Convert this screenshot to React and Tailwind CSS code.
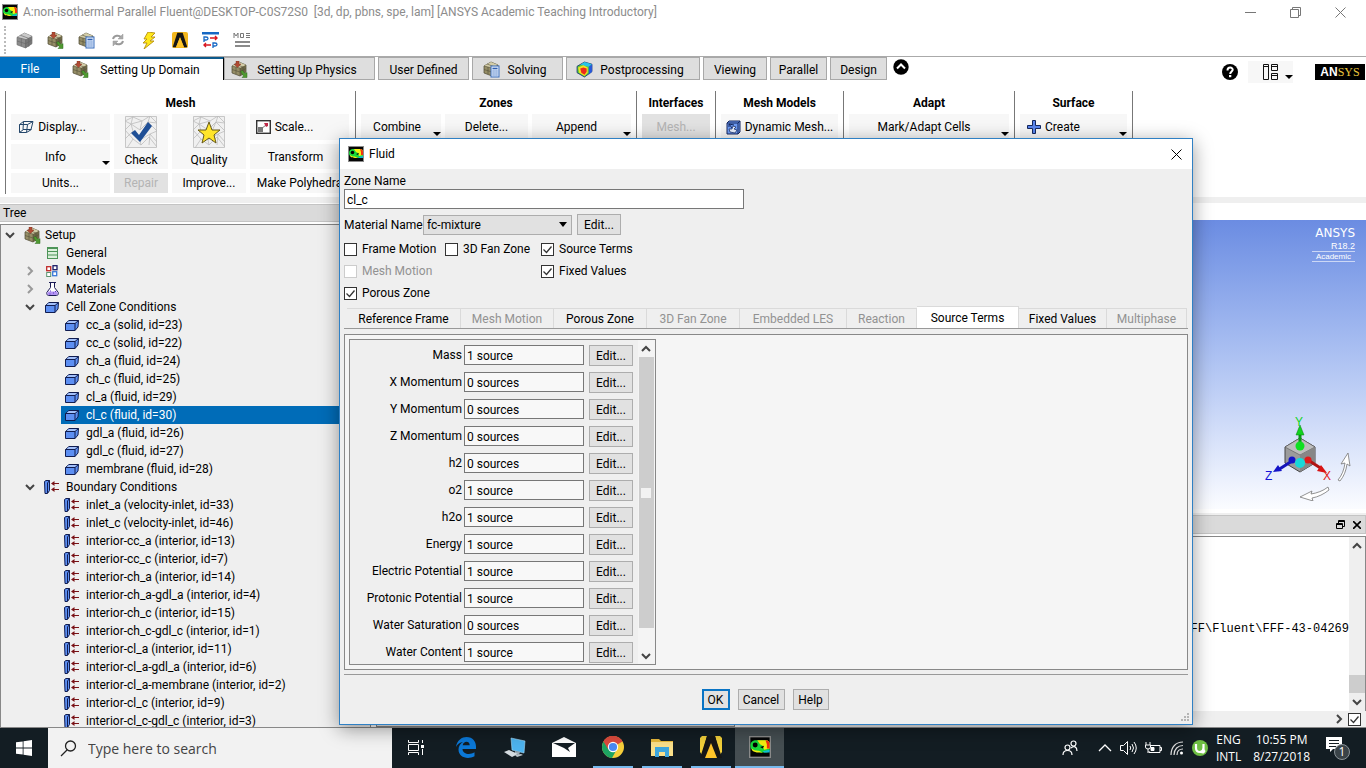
import React, { useState } from "react";
import { clsx } from "clsx";

/* --- DATA --- */

const treeItems = [
  { label: "Setup", level: 0, icon: "setup", arrow: "down" },
  { label: "General", level: 1, icon: "general" },
  { label: "Models", level: 1, icon: "models", arrow: "right" },
  { label: "Materials", level: 1, icon: "flask", arrow: "right" },
  { label: "Cell Zone Conditions", level: 1, icon: "cell", arrow: "down" },
  { label: "cc_a (solid, id=23)", level: 2, icon: "cell" },
  { label: "cc_c (solid, id=22)", level: 2, icon: "cell" },
  { label: "ch_a (fluid, id=24)", level: 2, icon: "cell" },
  { label: "ch_c (fluid, id=25)", level: 2, icon: "cell" },
  { label: "cl_a (fluid, id=29)", level: 2, icon: "cell" },
  { label: "cl_c (fluid, id=30)", level: 2, icon: "cell" },
  { label: "gdl_a (fluid, id=26)", level: 2, icon: "cell" },
  { label: "gdl_c (fluid, id=27)", level: 2, icon: "cell" },
  { label: "membrane (fluid, id=28)", level: 2, icon: "cell" },
  { label: "Boundary Conditions", level: 1, icon: "boundary", arrow: "down" },
  { label: "inlet_a (velocity-inlet, id=33)", level: 2, icon: "boundary" },
  { label: "inlet_c (velocity-inlet, id=46)", level: 2, icon: "boundary" },
  { label: "interior-cc_a (interior, id=13)", level: 2, icon: "boundary" },
  { label: "interior-cc_c (interior, id=7)", level: 2, icon: "boundary" },
  { label: "interior-ch_a (interior, id=14)", level: 2, icon: "boundary" },
  { label: "interior-ch_a-gdl_a (interior, id=4)", level: 2, icon: "boundary" },
  { label: "interior-ch_c (interior, id=15)", level: 2, icon: "boundary" },
  { label: "interior-ch_c-gdl_c (interior, id=1)", level: 2, icon: "boundary" },
  { label: "interior-cl_a (interior, id=11)", level: 2, icon: "boundary" },
  { label: "interior-cl_a-gdl_a (interior, id=6)", level: 2, icon: "boundary" },
  { label: "interior-cl_a-membrane (interior, id=2)", level: 2, icon: "boundary" },
  { label: "interior-cl_c (interior, id=9)", level: 2, icon: "boundary" },
  { label: "interior-cl_c-gdl_c (interior, id=3)", level: 2, icon: "boundary" },
];

const sources = [
  ["Mass", "1 source"],
  ["X Momentum", "0 sources"],
  ["Y Momentum", "0 sources"],
  ["Z Momentum", "0 sources"],
  ["h2", "0 sources"],
  ["o2", "1 source"],
  ["h2o", "1 source"],
  ["Energy", "1 source"],
  ["Electric Potential", "1 source"],
  ["Protonic Potential", "1 source"],
  ["Water Saturation", "0 sources"],
  ["Water Content", "1 source"],
];

const zoneTabs = [
  { label: "Reference Frame", width: "w-[114px]" },
  { label: "Mesh Motion", width: "w-[93px]", disabled: true },
  { label: "Porous Zone", width: "w-[93px]" },
  { label: "3D Fan Zone", width: "w-[93px]", disabled: true },
  { label: "Embedded LES", width: "w-[107px]", disabled: true },
  { label: "Reaction", width: "w-[70px]", disabled: true },
  { label: "Source Terms", width: "w-[102px]" },
  { label: "Fixed Values", width: "w-[88px]" },
  { label: "Multiphase", width: "w-[80px]", disabled: true },
];

/* --- ICONS --- */

const FluentIcon = ({ size = 16 }) => (
  <svg width={size} height={size} viewBox="0 0 16 16">
    <rect width="16" height="16" fill="#8a8a8a" />
    <rect x="1" y="1" width="14" height="14" fill="#050505" />
    <path d="M1 7c0-3 2-4 4-4h7c2 0 3 1 3 3v5c-1 1-3 1-5 1-2 0-3-1-4-1-3 0-5-1-5-4z" fill="#18d83a" />
    <path d="M6 3h6c2 0 3 1 3 3v3l-4 1-1-3-2-1z" fill="#f4ee10" />
    <path d="M12 3c2 0 3 1 3 3v3h-2V6z" fill="#f23010" />
    <path d="M2 9c2 2 4 1 6 2l2 1c-4 0-8 0-8-3z" fill="#f4ee10" />
    <path d="M10 11l5-1v2h-4z" fill="#10b8d8" />
    <circle cx="4.500" cy="6.500" r="1.800" fill="#000" />
    <path d="M8 8l3-1-1 2z" fill="#050505" />
  </svg>
);

const CubeBase = ({ gray }) => (
  <>
    <path d="M1 5l7-4 7 3v7l-6 4-8-3z" fill={gray ? "#8c8c8c" : "#958d66"} stroke={gray ? "#6f6f6f" : "#4c4832"} strokeWidth=".7" />
    <path d="M1 5l7-4 7 3-6 3z" fill={gray ? "#c9c9c9" : "#d3cda8"} />
    <path d="M9 7l6-3v7l-6 4z" fill={gray ? "#777" : "#6c6646"} />
    <path d="M1 5l8 2v8M4 3l8 3v8M1 8.500l8 2.500 6-3.500M5 6v7" fill="none" stroke={gray ? "#666" : "#55503a"} strokeWidth=".6" />
  </>
);

const CubeIcon = ({ gray }) => (
  <svg width="17" height="17" viewBox="0 0 16 16"><CubeBase gray={gray} /></svg>
);

const SetupIcon = () => (
  <svg width="17" height="17" viewBox="0 0 17 17" className="shrink-0">
    <CubeBase />
    <path d="M5 0h3v3h2L6.500 6.500 3 3h2z" fill="#b04a34" stroke="#7c2d1c" strokeWidth=".4" />
    <path d="M9.500 10.500l2-1 2.500 3 2-1v5h-5l1.500-1.500z" fill="#4f9a30" stroke="#2f6a1c" strokeWidth=".5" />
  </svg>
);

const CalcIcon = () => (
  <svg width="17" height="17" viewBox="0 0 17 17">
    <CubeBase />
    <rect x="8" y="5" width="8" height="11" fill="#dce9fb" stroke="#3d6ebc" />
    <path d="M9.500 7.500h5" stroke="#2f5faf" strokeWidth="1.500" />
    <path d="M9.500 10h5M9.500 12h5M9.500 14h5" stroke="#3d6ebc" strokeDasharray="1.200 .7" />
  </svg>
);

const RainbowCube = () => (
  <svg width="17" height="17" viewBox="0 0 16 16">
    <path d="M1 5l7-4 7 2v7l-7 5-7-4z" fill="#5ccc3a" stroke="#1c2f7a" strokeWidth=".8" />
    <path d="M4 3.500L8 1l7 2-3 2.500z" fill="#28c4e8" />
    <path d="M12 5.500L15 3v7l-3 3z" fill="#2858dc" />
    <path d="M2 6l5-2 4 2v5l-3 3-5-3z" fill="#f4e020" />
    <path d="M4 7l3-1 3 1v3l-2 3-3-2z" fill="#ee2a1c" />
  </svg>
);

const RefreshIcon = () => (
  <svg width="16" height="16" viewBox="0 0 16 16" fill="none" stroke="#999" strokeWidth="2">
    <path d="M3 7c1-4 6-4 8-2M13 9c-1 4-6 4-8 2" />
    <path d="M13 2v5H8zM3 14V9h5z" fill="#aaa" stroke="#999" strokeWidth=".5" />
  </svg>
);

const BoltIcon = () => (
  <svg width="16" height="17" viewBox="0 0 16 17">
    <path d="M7 0L14 1 10 5h4L9 9h4L3 17l3-6H2l4-4H3z" fill="#ffe81a" stroke="#b48d10" strokeWidth=".9" />
  </svg>
);

const AnsysMark = ({ size = 16, dark }) => (
  <svg width={size} height={size} viewBox="0 0 24 24">
    {!dark && <rect width="24" height="24" rx="3" fill="#f3b71d" />}
    {dark && <path d="M1 3l2-2h5L3 20l-2-3zM16 1h5l2 2v14l-2 3z" fill="#f3d03a" />}
    <path d="M8 1h8l7 22h-5L12 8 6 23H1z" fill="#161616" />
    <path d="M12 8l6 15H6z" fill="#ffc52a" />
  </svg>
);

const SwapIcon = () => (
  <svg width="17" height="17" viewBox="0 0 17 17">
    <path d="M0 1h17" stroke="#1668c4" strokeWidth="3" />
    <path d="M2 10V5h2q2 0 2 1.500T4 8H2M11 16v-5h2q2 0 2 1.500T13 14h-2" fill="none" stroke="#1668c4" strokeWidth="1.300" />
    <path d="M8 6h7m-2-2l2 2-2 2M9 13H2m2-2l-2 2 2 2" fill="none" stroke="#d8161f" strokeWidth="1.400" />
  </svg>
);

const ModelListIcon = () => (
  <svg width="17" height="17" viewBox="0 0 17 17" fill="none" stroke="#777">
    <path d="M1 6V1l2 3 2-3v5M7.500 1.500h3v4h-3zM13 1.500h4M13 3.500h4M13 5.500h4" />
    <path d="M2 10h15M2 14h15" strokeWidth="2" stroke="#8a8a8a" />
  </svg>
);

const WireCubeIcon = () => (
  <svg width="15" height="14" viewBox="0 0 15 14" fill="none" stroke="#24466a">
    <path d="M.5 4.500h8l-1 8h-7zM4.500 1.500h9.500l-2 8H4zM.5 4.500l4-3M8.500 4.500l5.500-3M7.500 12.500l5-3M.5 12.500l4-3" />
  </svg>
);

const MeshArt = ({ children }) => (
  <svg width="32" height="32" viewBox="0 0 32 32">
    <rect width="32" height="32" fill="#f0f0f0" />
    <path
      d="M0 5l8-4 9 4 8-5 7 7M0 14l6-6 9 6 8-8 9 9M0 23l8-8 7 9 10-6 7 8M2 32l6-9 8 6 8-8 8 10M8 0L6 8 0 5M17 5l-2 9 8-8M8 15l-2-7 11-3M25 0l-2 6 9 1M8 23l-8-9M15 24l8-18M16 29l-1-5M25 18l7-3M24 29l1-11M.5.500h31v31H.5z"
      fill="none"
      stroke="#bcbcbc"
      strokeWidth=".8"
    />
    {children}
  </svg>
);

const ScaleIcon = () => (
  <svg width="15" height="14" viewBox="0 0 15 14">
    <rect x=".7" y=".7" width="13.600" height="12.600" fill="#fff" stroke="#333" strokeWidth="1.400" />
    <path d="M2 7h5v5H2z" fill="#777" />
    <path d="M5 9l5-4" stroke="#777" />
    <path d="M8 3h4v3l-2 1z" fill="#c02a4a" />
  </svg>
);

const DynamicMeshIcon = () => (
  <svg width="15" height="15" viewBox="0 0 15 15">
    <path d="M1 3l2-2h11v11l-2 2H1z" fill="#6e9cf4" stroke="#14275e" />
    <path d="M1 3h11v11M12 3l2-2" stroke="#14275e" fill="none" />
    <path d="M3 7V4l5 1M3 4l3 4" stroke="#14275e" fill="none" />
    <path d="M7 6l3 1-2 2 3 1-2 3-5-1-1-3h3z" fill="#e6eefc" stroke="#14275e" strokeWidth=".7" />
  </svg>
);

const PlusIcon = () => (
  <svg width="14" height="14" viewBox="0 0 14 14">
    <path d="M5.500.5h3v5h5v3h-5v5h-3v-5h-5v-3h5z" fill="#5a86ee" stroke="#14275e" />
  </svg>
);

const CellIcon = () => (
  <svg width="14" height="11" viewBox="0 0 14 11" className="shrink-0">
    <path d="M.5 3.500L4 .5h9.500L13 7l-3 3.500H.5z" fill="#5d8ff2" stroke="#101c50" />
    <path d="M1 3.500L4 1h9l-3 2.500z" fill="#a3c0fa" />
    <path d="M.5 3.500H10v7M10 3.500l3.500-3" fill="none" stroke="#101c50" />
  </svg>
);

const BoundaryIcon = () => (
  <svg width="16" height="14" viewBox="0 0 16 14" className="shrink-0">
    <path d="M.5 1.500L2 .5h3.500v10l-2 3H1z" fill="#5d8ff2" stroke="#101c50" />
    <path d="M3.500 3v10M3.500 3l2-2.500" stroke="#101c50" />
    <path d="M8 3.500h7M8 9.500h7" stroke="#7a1216" strokeWidth="1.200" />
    <path d="M7 3.500L10.500 1v5zM7 9.500L10.500 7v5z" fill="#7a1216" />
  </svg>
);

const GeneralIcon = () => (
  <svg width="11" height="12" viewBox="0 0 11 12" className="shrink-0">
    <rect x=".5" y=".5" width="10" height="11" fill="#dcf0dc" stroke="#4d9458" />
    <path d="M0 1.500h11M1 4.500h9M1 8h9" stroke="#4d9458" />
  </svg>
);

const ModelsIcon = () => (
  <svg width="12" height="12" viewBox="0 0 12 12" fill="#fff" className="shrink-0">
    <rect x=".7" y="1.700" width="4" height="4" stroke="#c02828" strokeWidth="1.300" />
    <rect x="7" y=".7" width="4" height="4" stroke="#1a1a66" strokeWidth="1.300" />
    <rect x=".7" y="7.500" width="4" height="4" stroke="#5c9470" strokeWidth="1" />
    <rect x="6.700" y="6.700" width="4" height="4" stroke="#3a78d8" strokeWidth="1.300" />
  </svg>
);

const FlaskIcon = () => (
  <svg width="13" height="14" viewBox="0 0 13 14" className="shrink-0">
    <path d="M4.500.5v5L.8 10.500q-.5 3 2 3h7.500q2.500 0 2-3L8.500 5.500v-5" fill="#fff" stroke="#1c1c55" />
    <path d="M3 .5h7" stroke="#1c1c55" />
    <path d="M2 9.500h9l1 2-1 1.500H2l-1-1.500z" fill="#b394f2" />
    <path d="M4 9h1M7 11h1M9 9.500h1M3.500 12h1" stroke="#5c32c8" />
  </svg>
);

const treeIcons = {
  setup: <SetupIcon />,
  general: <GeneralIcon />,
  models: <ModelsIcon />,
  flask: <FlaskIcon />,
  cell: <CellIcon />,
  boundary: <BoundaryIcon />,
};

const Chevron = ({ dir, light }) => (
  <svg width="10" height="10" viewBox="0 0 10 10" fill="none" stroke={light ? "#999" : "#444"} strokeWidth="2">
    {dir === "down" && <path d="M1 3l4 4 4-4" />}
    {dir === "up" && <path d="M1 7l4-4 4 4" />}
    {dir === "right" && <path d="M3 1l4 4-4 4" />}
  </svg>
);

const Caret = () => (
  <svg width="8" height="4" viewBox="0 0 8 4" className="absolute right-0 bottom-1">
    <path d="M0 0h8L4 4z" />
  </svg>
);

const CloseIcon = () => (
  <svg width="11" height="11" viewBox="0 0 11 11" stroke="currentColor" fill="none">
    <path d="M.5.5l10 10M10.500.5l-10 10" />
  </svg>
);

const AxisTriad = () => (
  <svg width="90" height="90" viewBox="0 0 90 90" aria-label="Axis triad">
    <path d="M20 36l15-9 15 9v16L35 61l-15-9z" fill="#9b9b9b" stroke="#444" />
    <path d="M20 36l15-9 15 9-15 8z" fill="#bdbdbd" stroke="#555" strokeWidth=".6" />
    <path d="M35 44l15-8v16l-15 9z" fill="#878787" />
    <path d="M35 35V20" stroke="#0a9a14" strokeWidth="3" />
    <path d="M35 14l-4 10h8z" fill="#12d41e" stroke="#0a7a10" strokeWidth=".5" />
    <circle cx="35" cy="35" r="4.500" fill="#10e020" />
    <path d="M27 50l-14 9" stroke="#1414b8" strokeWidth="3" />
    <path d="M8 61l5-7 4 6z" fill="#1414c8" />
    <circle cx="27" cy="49" r="3.500" fill="#1414c8" />
    <path d="M43 49l14 9" stroke="#b01414" strokeWidth="3" />
    <path d="M62 62l-10-2 4-6z" fill="#d81414" />
    <circle cx="43" cy="49" r="3.500" fill="#e01a1a" />
    <circle cx="35" cy="52" r="5" fill="#18d8d8" />
    <text x="30" y="15" fontSize="12" fill="#12d41e" fontFamily="Liberation Sans">Y</text>
    <text x="0" y="69" fontSize="12" fill="#1414d8" fontFamily="Liberation Sans">Z</text>
    <text x="58" y="69" fontSize="12" fill="#e01a1a" fontFamily="Liberation Sans">X</text>
    <g fill="#fff" stroke="#777" strokeWidth=".8">
      <path d="M73 69c4-5 6-10 7-17l-4 1 7-11 2 13-3-2c-1 7-3 12-7 17z" />
      <path d="M63 80c-5 4-11 6-17 7l1-3-12 6 13 4-1-3c6-1 12-4 17-8z" transform="translate(0 -4)" />
    </g>
  </svg>
);

/* --- SHARED CONTROLS --- */

const RibbonButton = ({ children, caret, disabled, className }) => (
  <button
    disabled={disabled}
    className={clsx(
      "relative flex items-center justify-center gap-1 whitespace-nowrap",
      disabled ? "bg-[#e2e2e2] text-[#b4b4b4]" : "bg-[#f7f7f7]",
      className
    )}
  >
    {children}
    {caret && <Caret />}
  </button>
);

const RibbonGroup = ({ title, children, className }) => (
  <section className={clsx("flex flex-col border-r border-[#777] px-[5px]", className)}>
    <h2 className="flex h-[23px] items-center justify-center font-bold">{title}</h2>
    <div className="flex gap-1">{children}</div>
  </section>
);

const PushButton = ({ children, primary, className }) => (
  <button
    className={clsx(
      "h-[21px] shrink-0 bg-[#e1e1e1] leading-4",
      primary ? "border-2 border-[#0a74c4]" : "border border-[#adadad]",
      className
    )}
  >
    {children}
  </button>
);

const CheckBox = ({ label, checked: initial = false, disabled, className }) => {
  const [checked, setChecked] = useState(initial);
  return (
    <label className={clsx("flex h-[22px] items-center gap-[5px]", disabled && "text-[#929292]", className)}>
      <span className="relative flex">
        <input
          type="checkbox"
          aria-label={label ? undefined : "Auto scroll"}
          checked={checked}
          disabled={disabled}
          onChange={(e) => setChecked(e.target.checked)}
          className="size-[13px] appearance-none border border-[#333] bg-white disabled:border-[#ccc]"
        />
        {checked && (
          <svg viewBox="0 0 13 13" className="pointer-events-none absolute inset-0" fill="none" stroke="#333" strokeWidth="1.300">
            <path d="M2.500 6.500l3 3 5-6" />
          </svg>
        )}
      </span>
      {label}
    </label>
  );
};

/* --- MAIN WINDOW --- */

const TitleBar = () => (
  <header className="flex h-6 shrink-0 items-center bg-white pl-[2px] text-[#8c8c8c]">
    <FluentIcon />
    <h1 className="ml-[5px] whitespace-pre">
      {"A:non-isothermal Parallel Fluent@DESKTOP-C0S72S0  [3d, dp, pbns, spe, lam] [ANSYS Academic Teaching Introductory]"}
    </h1>
    <div className="ml-auto flex items-center gap-[34px] pr-5">
      <button aria-label="Minimize" className="h-px w-[11px] bg-[#777]" />
      <button aria-label="Restore" className="text-[#777]">
        <svg width="11" height="11" viewBox="0 0 11 11" fill="none" stroke="currentColor">
          <path d="M.5 2.500h8v8h-8zM2.500 2.500v-2h8v8h-2" />
        </svg>
      </button>
      <button aria-label="Close" className="text-[#777]"><CloseIcon /></button>
    </div>
  </header>
);

const Toolbar = () => (
  <nav className="flex h-[33px] shrink-0 items-center border-b border-[#aaa] pl-1">
    <span className="mr-[10px] h-7 border-l-2 border-dotted border-[#bbb]" />
    <div className="flex gap-[14px]">
      <button aria-label="Mesh" className="flex w-[17px] justify-center"><CubeIcon gray /></button>
      <button aria-label="Setup" className="flex w-[17px] justify-center"><SetupIcon /></button>
      <button aria-label="Solution" className="flex w-[17px] justify-center"><CalcIcon /></button>
      <button aria-label="Refresh" className="flex w-[17px] justify-center"><RefreshIcon /></button>
      <button aria-label="Update" className="flex w-[17px] justify-center"><BoltIcon /></button>
      <button aria-label="Workbench" className="flex w-[17px] justify-center"><AnsysMark /></button>
      <button aria-label="Parameters" className="flex w-[17px] justify-center"><SwapIcon /></button>
      <button aria-label="Model list" className="flex w-[17px] justify-center"><ModelListIcon /></button>
    </div>
  </nav>
);

const RibbonTab = ({ icon, children, className }) => (
  <button
    className={clsx(
      "mr-[3px] flex h-[23px] items-center justify-center border border-[#a8a8a8] bg-[#dedede] pt-[2px]",
      className
    )}
  >
    {icon}
    <span className="grow">{children}</span>
  </button>
);

const RibbonTabs = () => (
  <div className="flex h-6 items-start">
    <button className="h-[21px] w-[60px] bg-[#0070c0] pt-[2px] text-white">File</button>
    <button className="flex h-[23px] w-[164px] items-center border-t-2 border-r border-t-[#0d5a8c] border-r-black bg-white pl-3">
      <SetupIcon />
      <span className="grow pr-3">Setting Up Domain</span>
    </button>
    <RibbonTab icon={<SetupIcon />} className="w-[151px] pr-2 pl-[6px]">Setting Up Physics</RibbonTab>
    <RibbonTab className="w-[91px]">User Defined</RibbonTab>
    <RibbonTab icon={<CalcIcon />} className="w-[91px] pr-2 pl-[10px]">Solving</RibbonTab>
    <RibbonTab icon={<RainbowCube />} className="w-[134px] pr-2 pl-[9px]">Postprocessing</RibbonTab>
    <RibbonTab className="w-[64px]">Viewing</RibbonTab>
    <RibbonTab className="w-[57px]">Parallel</RibbonTab>
    <RibbonTab className="w-[57px]">Design</RibbonTab>
    <button aria-label="Collapse ribbon" className="ml-[3px] pt-[2px]">
      <svg width="16" height="16" viewBox="0 0 16 16">
        <circle cx="8" cy="8" r="7.700" />
        <path d="M4 9.500l4-4 4 4" fill="none" stroke="#fff" strokeWidth="2" />
      </svg>
    </button>
  </div>
);

const Ribbon = () => (
  <div className="flex shrink-0 bg-white">
    <div className="h-[140px]">
      <RibbonTabs />
      <div className="flex items-start pt-[10px]">
        <RibbonGroup title="Mesh" className="ml-[5px] h-[103px] w-[351px] border-l">
          <div className="flex w-[99px] flex-col gap-1">
            <RibbonButton className="h-[26px] pr-4"><WireCubeIcon />Display...</RibbonButton>
            <RibbonButton caret className="h-[25px] pr-[10px]">Info</RibbonButton>
            <RibbonButton className="h-5">Units...</RibbonButton>
          </div>
          <div className="flex w-[54px] flex-col gap-1">
            <RibbonButton className="h-[55px] flex-col">
              <MeshArt><path d="M6 17l4-3 4 5L23 6l4 4-12 16z" fill="#1f4f96" /></MeshArt>
              Check
            </RibbonButton>
            <RibbonButton disabled className="h-5">Repair</RibbonButton>
          </div>
          <div className="flex w-[74px] flex-col gap-1">
            <RibbonButton className="h-[55px] flex-col">
              <MeshArt>
                <path d="M16 6l3 8h8l-6 5 2 8-7-5-7 5 2-8-6-5h8z" fill="#ffe52a" stroke="#66591a" />
              </MeshArt>
              Quality
            </RibbonButton>
            <RibbonButton className="h-5">Improve...</RibbonButton>
          </div>
          <div className="flex w-[99px] flex-col gap-1">
            <RibbonButton className="h-[26px] pr-[30px]"><ScaleIcon />Scale...</RibbonButton>
            <RibbonButton className="h-[25px] pr-2">Transform</RibbonButton>
            <RibbonButton className="h-5">Make Polyhedra</RibbonButton>
          </div>
        </RibbonGroup>
        <RibbonGroup title="Zones" className="h-[103px] w-[281px]">
          <RibbonButton caret className="h-[26px] w-[80px] pr-2">Combine</RibbonButton>
          <RibbonButton className="h-[26px] w-[83px]">Delete...</RibbonButton>
          <RibbonButton caret className="h-[26px] w-[99px] pr-[10px]">Append</RibbonButton>
        </RibbonGroup>
        <RibbonGroup title="Interfaces" className="h-[103px] w-[79px]">
          <RibbonButton disabled className="h-[26px] w-[68px]">Mesh...</RibbonButton>
        </RibbonGroup>
        <RibbonGroup title="Mesh Models" className="h-[103px] w-[128px]">
          <RibbonButton className="h-[26px] w-[117px]"><DynamicMeshIcon />Dynamic Mesh...</RibbonButton>
        </RibbonGroup>
        <RibbonGroup title="Adapt" className="h-[103px] w-[171px]">
          <RibbonButton caret className="h-[26px] w-[160px] pr-[10px]">Mark/Adapt Cells</RibbonButton>
        </RibbonGroup>
        <RibbonGroup title="Surface" className="h-[103px] w-[118px]">
          <RibbonButton caret className="h-[26px] w-[107px] pr-10"><PlusIcon />Create</RibbonButton>
        </RibbonGroup>
      </div>
    </div>
    <div className="ml-auto flex h-7 items-center gap-[10px] pt-[2px] pr-px">
      <button aria-label="Help">
        <svg width="16" height="16" viewBox="0 0 16 16">
          <circle cx="8" cy="8" r="8" />
          <path d="M5.500 6.500c0-4 5.500-3.500 5.200-.6C10.500 7.500 8.200 7.500 8.200 10" fill="none" stroke="#fff" strokeWidth="2" />
          <rect x="7" y="11" width="2.300" height="2.200" fill="#fff" />
        </svg>
      </button>
      <button aria-label="Arrange panes" className="relative flex h-[22px] w-[45px] items-center bg-[#f7f7f7] pl-[14px]">
        <svg width="17" height="16" viewBox="0 0 17 16" fill="none" stroke="#111">
          <path d="M1.500.5h5v15h-5zM9.500.5h6v6h-6zM9.500 9.500h6v6h-6zM1 2.500h6M9 2.500h7M9 11.500h7" />
        </svg>
        <Caret />
      </button>
      <span className="ml-3 flex h-4 w-[50px] items-center justify-center bg-black font-['Liberation_Sans',sans-serif] text-[12px] font-bold text-white">
        AN<span className="font-['Liberation_Serif',serif] font-normal text-[#e8c63c]">SYS</span>
      </span>
    </div>
  </div>
);

const TreePane = () => {
  const [selected, setSelected] = useState("cl_c (fluid, id=30)");
  return (
    <aside className="flex w-[371px] shrink-0 flex-col">
      <h2 className="h-[18px] border-y border-[#c4c4c4] bg-[#dadada] pl-[3px] leading-4">Tree</h2>
      <ul className="mt-[2px] min-h-0 grow basis-0 overflow-hidden border border-b-0 border-[#888] bg-[#efefef] pt-px">
        {treeItems.map((item) => (
          <li key={item.label} className="flex h-[18px] items-center">
            <span
              className={clsx(
                "flex shrink-0 items-center pl-1",
                item.level === 0 && "w-[22px]",
                item.level === 1 && "w-[40px] pl-6",
                item.level === 2 && "w-[60px]"
              )}
            >
              {item.arrow && <Chevron dir={item.arrow} light={item.arrow === "right"} />}
            </span>
            <button
              onClick={() => setSelected(item.label)}
              className={clsx(
                "flex h-[18px] grow items-center text-left whitespace-nowrap",
                selected === item.label && "bg-[#006cb8] text-white"
              )}
            >
              <span className={clsx("flex shrink-0 justify-center", item.level === 0 ? "w-[22px] pr-1" : "w-[25px] pr-[3px]")}>
                {treeIcons[item.icon]}
              </span>
              {item.label}
            </button>
          </li>
        ))}
      </ul>
    </aside>
  );
};

const GraphicsPane = () => (
  <div className="mt-4 flex h-[289px] shrink-0 flex-col items-end justify-between bg-linear-to-b from-[#6b8ce2] to-[#fbfcff]">
    <div className="flex flex-col items-end pt-[5px] pr-[11px] font-['DejaVu_Sans',sans-serif] text-white">
      <span className="text-[12px] leading-4">ANSYS</span>
      <span className="font-['Liberation_Sans',sans-serif] text-[9px] leading-[10px]">R18.2</span>
      <span className="border-y border-white/60 px-1 font-['Liberation_Sans',sans-serif] text-[8px] leading-[9px]">Academic</span>
    </div>
    <div className="pr-[11px] pb-2"><AxisTriad /></div>
  </div>
);

const ConsolePane = () => (
  <div className="mt-1 flex min-h-0 grow flex-col border-t-2 border-[#efefef]">
    <div className="flex h-[19px] shrink-0 items-center justify-end gap-2 border border-[#c4c4c4] bg-[#dadada] pr-1">
      <button aria-label="Float console">
        <svg width="9" height="9" viewBox="0 0 9 9" fill="none" stroke="#000">
          <path d="M.5 3.500h6v5h-6zM.5 4.500h6M2.500 3V.5h6v6H7M2.500 1.500h6" />
        </svg>
      </button>
      <button aria-label="Close console">
        <svg width="8" height="8" viewBox="0 0 8 8" stroke="#000" strokeWidth="1.600"><path d="M0 0l8 8M8 0L0 8" /></svg>
      </button>
    </div>
    <div className="mt-[2px] flex min-h-0 grow border-t border-r border-[#888] bg-white">
      <div className="flex grow items-center justify-end pt-[10px]">
        <pre className="font-['Liberation_Mono',monospace] text-[12px]">{"FFF\\Fluent\\FFF-43-04269"}</pre>
      </div>
      <div className="flex w-4 flex-col items-center justify-between bg-[#efefef] py-1">
        <Chevron dir="up" />
        <div className="flex w-full flex-col items-center gap-1">
          <span className="h-[18px] w-full bg-[#cdcdcd]" />
          <Chevron dir="down" />
        </div>
      </div>
    </div>
    <div className="flex h-4 shrink-0 items-center justify-end gap-1 overflow-hidden bg-[#efefef] pr-[5px]">
      <Chevron dir="right" />
      <CheckBox checked />
    </div>
  </div>
);

/* --- FLUID DIALOG --- */

const SourceList = () => (
  <div className="flex h-[326px] w-[307px] overflow-hidden border border-[#888] bg-[#efefef]">
    <div className="flex grow flex-col gap-[6px] pt-[5px]">
      {sources.map(([name, value]) => {
        const id = name.toLowerCase().replace(/ /g, "-");
        return (
          <div key={name} className="flex h-[21px] shrink-0 items-start">
            <label htmlFor={id} className="w-[113px] pr-px text-right leading-[21px]">{name}</label>
            <input
              id={id}
              readOnly
              value={value}
              className="mr-[5px] ml-px h-5 w-[120px] border border-[#777] bg-[#f8f8f8] px-[2px] pt-px"
            />
            <PushButton className="w-11">Edit...</PushButton>
          </div>
        );
      })}
    </div>
    <div className="flex w-[17px] flex-col items-center bg-[#f4f4f4] pr-px">
      <button aria-label="Scroll up" className="flex h-[17px] items-center"><Chevron dir="up" /></button>
      <div className="flex h-[271px] w-[15px] items-center justify-center bg-[#cdcdcd]">
        <span className="size-[10px] bg-[#f2f2f2]" />
      </div>
      <button aria-label="Scroll down" className="flex grow items-center pt-5"><Chevron dir="down" /></button>
    </div>
  </div>
);

const FluidDialog = () => {
  const [tab, setTab] = useState("Source Terms");
  return (
    <div
      role="dialog"
      aria-label="Fluid"
      className="absolute top-[138px] left-[339px] flex w-[854px] flex-col border border-[#2f80c4] bg-[#efefef] shadow-[0_4px_18px_rgba(0,0,0,0.4)]"
    >
      <div className="flex h-[30px] items-center bg-white pr-[10px] pl-2">
        <FluentIcon />
        <h2 className="ml-[5px]">Fluid</h2>
        <button aria-label="Close dialog" className="ml-auto"><CloseIcon /></button>
      </div>

      <div className="flex flex-col px-1 pt-1">
        <label htmlFor="zone-name" className="h-4 leading-4">Zone Name</label>
        <input id="zone-name" defaultValue="cl_c" className="h-5 w-[400px] border border-[#777] bg-white px-[2px] pt-px" />

        <div className="mt-[5px] flex items-center">
          <label htmlFor="material" className="w-[79px] whitespace-nowrap">Material Name</label>
          <div className="relative flex items-center">
            <select id="material" className="h-5 w-[149px] appearance-none border border-[#adadad] bg-[#e1e1e1] pl-[3px]">
              <option>fc-mixture</option>
            </select>
            <svg width="8" height="5" viewBox="0 0 8 5" className="pointer-events-none absolute right-[5px]">
              <path d="M0 0h8L4 5z" />
            </svg>
          </div>
          <PushButton className="ml-[5px] w-11">Edit...</PushButton>
        </div>

        <div className="mt-[3px] grid grid-cols-[101px_96px_1fr]">
          <CheckBox label="Frame Motion" />
          <CheckBox label="3D Fan Zone" />
          <CheckBox label="Source Terms" checked />
          <CheckBox label="Mesh Motion" disabled className="col-span-2" />
          <CheckBox label="Fixed Values" checked />
          <CheckBox label="Porous Zone" checked />
        </div>

        <div role="tablist" className="mt-[3px] flex h-[22px] items-end border-b border-[#999] pl-[3px]">
          {zoneTabs.map((t) => (
            <button
              key={t.label}
              role="tab"
              disabled={t.disabled}
              onClick={() => setTab(t.label)}
              className={clsx(
                "border-t border-r border-[#dadada] whitespace-nowrap disabled:text-[#929292]",
                t.width,
                tab === t.label ? "h-[22px] bg-white" : "h-5"
              )}
            >
              {t.label}
            </button>
          ))}
        </div>

        <div className="mt-[5px] h-[336px] border border-[#888] bg-[#f5f5f5] p-1">
          <SourceList />
        </div>
        <div className="mt-1 border-t border-[#999]" />
      </div>

      <div className="relative flex h-[49px] items-center justify-center gap-2 pr-[2px]">
        <PushButton primary className="w-7">OK</PushButton>
        <PushButton className="w-[47px]">Cancel</PushButton>
        <PushButton className="w-9">Help</PushButton>
        <svg width="10" height="10" viewBox="0 0 10 10" fill="#b4b4b4" className="absolute right-[2px] bottom-[2px]">
          <path d="M7 1h2v2H7zM7 4h2v2H7zM4 4h2v2H4zM7 7h2v2H7zM4 7h2v2H4zM1 7h2v2H1z" />
        </svg>
      </div>
    </div>
  );
};

/* --- TASKBAR --- */

const TaskButton = ({ label, open, active, children }) => (
  <button
    aria-label={label}
    className={clsx("flex h-10 w-[49px] flex-col items-center", active && "bg-[#454e52]")}
  >
    <span className="flex grow items-center">{children}</span>
    <span className={clsx("h-[2px]", active ? "w-full" : "w-10", open && "bg-[#76b9ed]")} />
  </button>
);

const Taskbar = () => (
  <footer className="flex h-10 shrink-0 items-center bg-[#131d23] text-white">
    <button aria-label="Start" className="flex h-10 w-12 items-center justify-center">
      <svg width="16" height="16" viewBox="0 0 16 16" fill="#fff">
        <path d="M0 2.300L6.700 1.400v6.100H0zM7.500 1.300L16 0v7.500H7.500zM0 8.400h6.700v6.200L0 13.700zM7.500 8.400H16V16l-8.500-1.200z" />
      </svg>
    </button>
    <label className="flex h-10 w-[344px] items-center gap-[11px] bg-[#f2f2f2] pl-3">
      <svg width="17" height="17" viewBox="0 0 17 17" fill="none" stroke="#222" strokeWidth="1.300">
        <circle cx="10.500" cy="6" r="5" />
        <path d="M7 10l-6 6" />
      </svg>
      <input
        aria-label="Search"
        placeholder="Type here to search"
        className="h-6 grow bg-transparent font-['Open_Sans',sans-serif] text-[14px] text-black placeholder:text-[#444]"
      />
    </label>

    <div className="flex">
      <TaskButton label="Task view">
        <svg width="17" height="15" viewBox="0 0 17 15" fill="none" stroke="#fff">
          <path d="M.5 0v2.500h10V0M.5 4.500h10v6H.5zM.5 15v-2.500h10V15M14.500 0v3M14.500 9v6" />
          <path d="M13 5h3v3h-3z" fill="#fff" stroke="none" />
        </svg>
      </TaskButton>
      <TaskButton label="Edge">
        <svg width="20" height="21" viewBox="0 0 20 21">
          <path d="M0 10C1 3 6 0 10.500 0 17 0 20 5 20 9.500V12H6.500c.3 5 7 6.500 12 3.300v4C11 23 2.500 20 2.500 12.500c0-3.500 2-6 4.500-7.500C4 5.500 1.500 7 0 10zm6.700-1.800h7c0-5-6.500-4.500-7 0z" fill="#0b78d7" />
        </svg>
      </TaskButton>
      <TaskButton label="This PC">
        <svg width="23" height="21" viewBox="0 0 23 21">
          <path d="M8 1l14 3-1 12-12-3z" fill="#4db4f0" stroke="#a6dcfa" strokeWidth=".6" />
          <path d="M12 14l5 1-1 3-4-1z" fill="#9aa9b3" />
          <path d="M1 15l5-2 9 4-6 3z" fill="#d4dbe0" />
          <path d="M12 18l6-1 2 1-6 2z" fill="#b9c3ca" />
        </svg>
      </TaskButton>
      <TaskButton label="Mail">
        <svg width="24" height="20" viewBox="0 0 24 20">
          <path d="M0 6l12-6 12 6v14H0z" fill="#fff" />
          <path d="M1 6h22l-7 5 2 4-6-4z" fill="#131d23" />
        </svg>
      </TaskButton>
      <TaskButton label="Chrome" open>
        <svg width="22" height="22" viewBox="0 0 22 22">
          <circle cx="11" cy="11" r="11" fill="#f7cf3b" />
          <path d="M11 11L1.500 5.500A11 11 0 0 1 20.500 5.500z" fill="#dd4b3e" />
          <path d="M1.500 5.500A11 11 0 0 0 10 22l5-9-4-2z" fill="#1da462" />
          <path d="M11 5.800h9.600A11 11 0 0 0 1.500 5.500L6 13z" fill="#dd4b3e" />
          <circle cx="11" cy="11" r="5.200" fill="#fff" />
          <circle cx="11" cy="11" r="4.100" fill="#4a8af4" />
        </svg>
      </TaskButton>
      <TaskButton label="File Explorer" open>
        <svg width="22" height="19" viewBox="0 0 22 19">
          <path d="M0 1h8l2 2h12v15H0z" fill="#e9b93a" />
          <path d="M0 4h22v14H0z" fill="#fbe08a" />
          <path d="M4 9h14v10h-4v-5H8v5H4z" fill="#3fa7dd" />
        </svg>
      </TaskButton>
      <TaskButton label="Workbench" open><AnsysMark size={24} dark /></TaskButton>
      <TaskButton label="Fluent" open active><FluentIcon size={22} /></TaskButton>
    </div>

    <div className="ml-auto flex items-center gap-2 pr-4 font-['Open_Sans',sans-serif] text-[12px]">
      <button aria-label="People" className="mr-3">
        <svg width="16" height="16" viewBox="0 0 16 16" fill="none" stroke="#fff" strokeWidth="1.200">
          <circle cx="5.500" cy="7.500" r="2.500" />
          <path d="M1 15c0-6 9-6 9 0" />
          <circle cx="11.500" cy="3.500" r="2.500" />
          <path d="M9 8c3-3 6-1 6 3" />
        </svg>
      </button>
      <button aria-label="Hidden icons">
        <svg width="14" height="8" viewBox="0 0 14 8" fill="none" stroke="#fff" strokeWidth="1.300"><path d="M1 7l6-6 6 6" /></svg>
      </button>
      <button aria-label="Volume">
        <svg width="17" height="14" viewBox="0 0 17 14" fill="none" stroke="#fff">
          <path d="M.5 4.500h3l4-4v13l-4-4h-3zM10 5q1.500 2 0 4M12 3q3 4 0 8M14 1q4.500 6 0 12" />
        </svg>
      </button>
      <button aria-label="Battery">
        <svg width="17" height="13" viewBox="0 0 17 13" fill="none" stroke="#fff">
          <path d="M6 3.500h9v7H4V9M15 5.500h1.500v3H15M1 0v3M5 0v3M.5 3h5v2q0 2-2.500 2T.5 5zM3 7v4" />
          <path d="M6 5.500h3v3H6z" fill="#fff" />
        </svg>
      </button>
      <button aria-label="Network">
        <svg width="14" height="14" viewBox="0 0 14 14" fill="none" stroke="#ddd" strokeWidth="1.200">
          <path d="M1 14C1 6 6 1 13 1M4 14c0-6 4-9.500 9-9.500M7 14c0-4 2.500-6 6-6" />
          <circle cx="11.500" cy="12" r="1.500" fill="#fff" stroke="none" />
        </svg>
      </button>
      <button aria-label="uTorrent">
        <svg width="16" height="16" viewBox="0 0 16 16">
          <circle cx="8" cy="8" r="8" fill="#6fbf44" />
          <path d="M4 4v4q0 4 4 4 3 0 4 1M11.500 4v5q0 2 1.500 3M8 12q3.500-.5 3.500-4" fill="none" stroke="#fff" strokeWidth="2.200" />
        </svg>
      </button>
      <div className="text-center leading-[17px]">ENG<br />INTL</div>
      <div className="ml-1 text-center leading-[17px]">10:55 PM<br />8/27/2018</div>
      <button aria-label="Notifications" className="relative ml-2 h-6 w-6">
        <svg width="24" height="24" viewBox="0 0 24 24">
          <path d="M0 1h16v12H7l-3 3v-3H0z" fill="#fff" />
          <path d="M3 4.500h10M3 7.500h10M3 10.500h7" stroke="#131d23" />
          <circle cx="16" cy="16" r="7.500" fill="#3a4348" stroke="#8b9398" />
        </svg>
        <span className="absolute right-0 bottom-0 w-4 text-center leading-4">1</span>
      </button>
    </div>
  </footer>
);

const App = () => (
  <div className="relative flex h-screen flex-col overflow-hidden bg-white font-[Roboto,'Noto_Sans',sans-serif] text-[12px] leading-4 text-black">
    <TitleBar />
    <Toolbar />
    <Ribbon />
    <main className="flex min-h-0 grow flex-col border-t-[6px] border-[#efefef]">
      <div className="flex min-h-0 grow gap-[5px] border-b border-[#888] pt-px">
        <TreePane />
        <div className="mt-[21px] w-[359px] shrink-0 border border-[#888] bg-[#efefef]" />
        <div className="flex min-w-0 grow flex-col">
          <GraphicsPane />
          <ConsolePane />
        </div>
      </div>
    </main>
    <Taskbar />
    <FluidDialog />
  </div>
);

export default App;
